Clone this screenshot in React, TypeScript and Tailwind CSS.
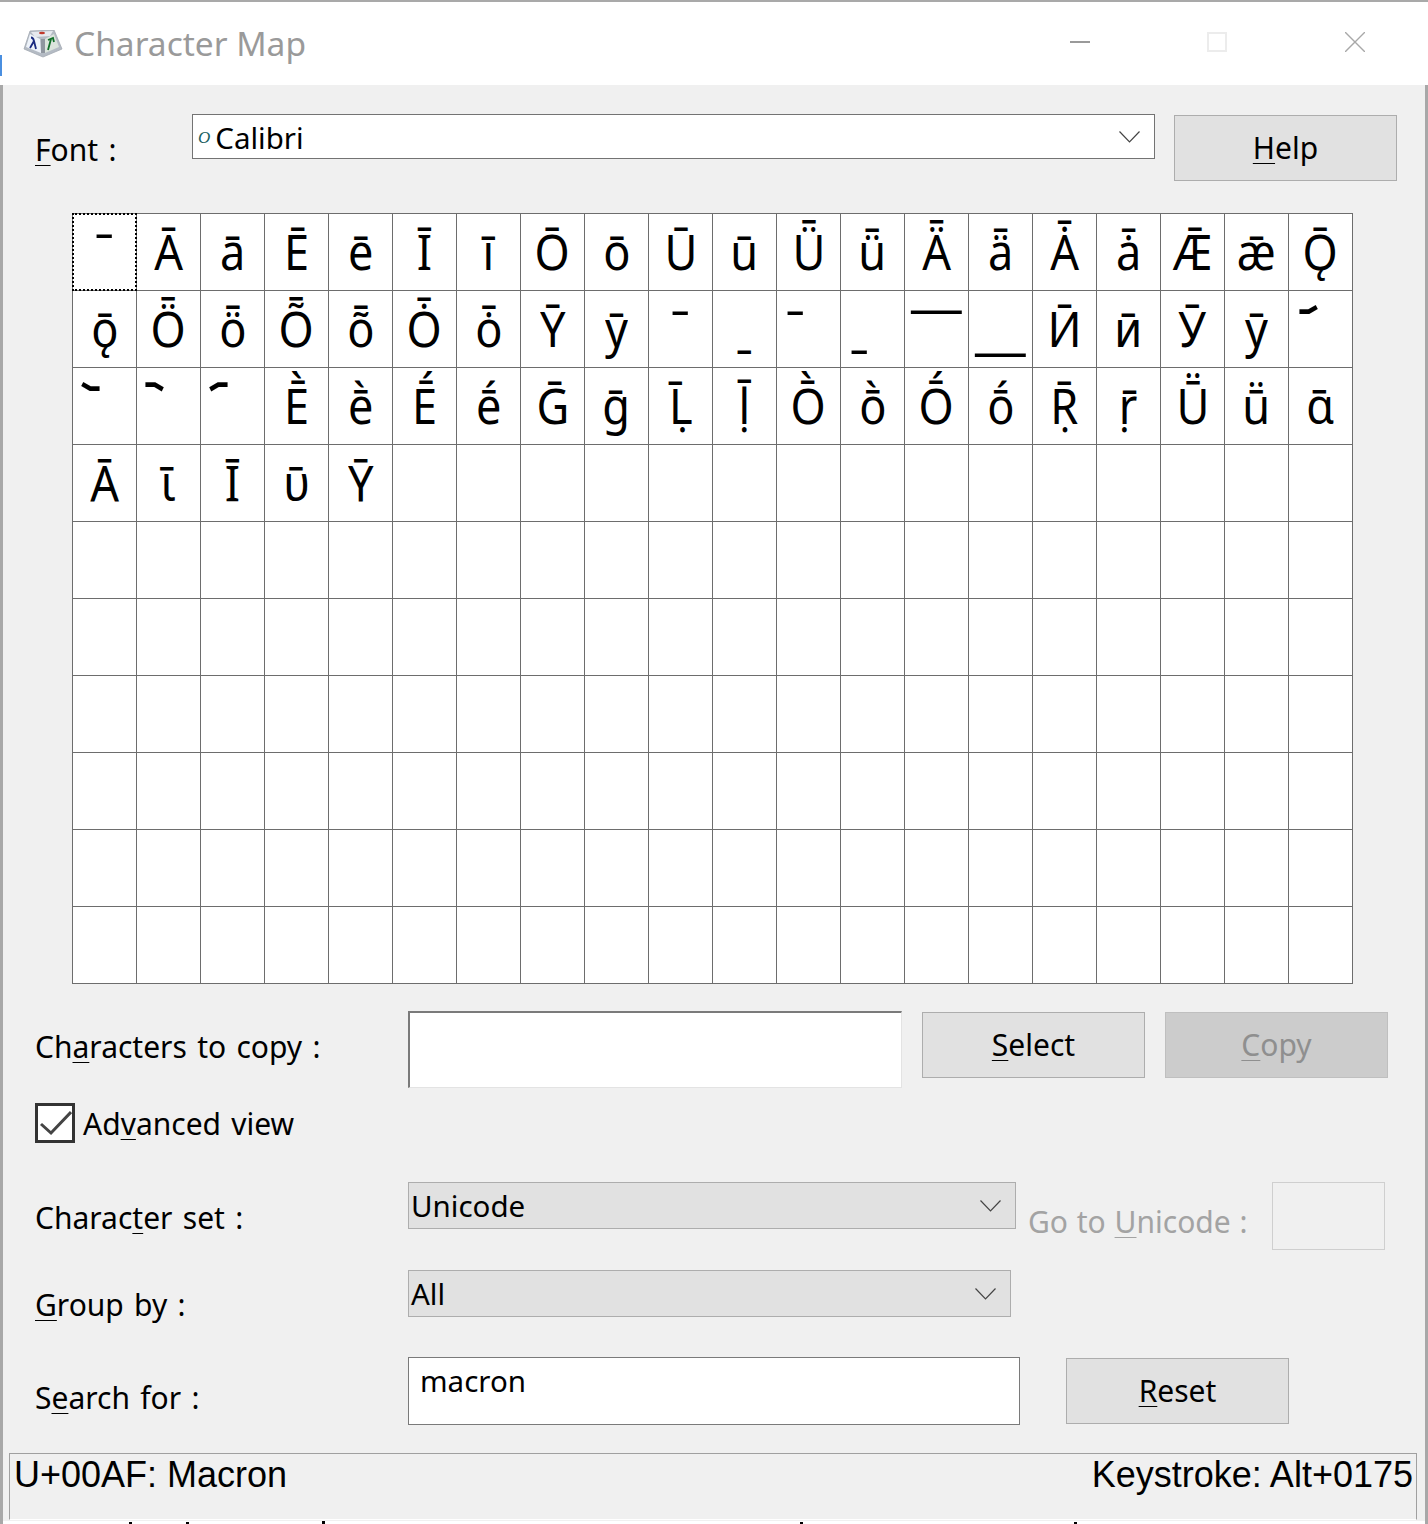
const GLYPHS = [
  'ˉ', 'Ā', 'ā', 'Ē', 'ē', 'Ī', 'ī', 'Ō', 'ō', 'Ū', 'ū', 'Ǖ', 'ǖ', 'Ǟ', 'ǟ', 'Ǡ', 'ǡ', 'Ǣ', 'ǣ', 'Ǭ',
  'ǭ', 'Ȫ', 'ȫ', 'Ȭ', 'ȭ', 'Ȱ', 'ȱ', 'Ȳ', 'ȳ', 'ˉ', 'ˍ', 'ˉ', 'ˍ', 'ˉ', 'ˍ', 'Ӣ', 'ӣ', 'Ӯ', 'ӯ', '\u00A0\u1DC4',
  '\u00A0\u1DC5', '\u00A0\u1DC6', '\u00A0\u1DC7', 'Ḕ', 'ḕ', 'Ḗ', 'ḗ', 'Ḡ', 'ḡ', 'Ḹ', 'ḹ', 'Ṑ', 'ṑ', 'Ṓ', 'ṓ', 'Ṝ', 'ṝ', 'Ṻ', 'ṻ', 'ᾱ',
  'Ᾱ', 'ῑ', 'Ῑ', 'ῡ', 'Ῡ',
]

// the few marks that sit off centre in the cell
const TWEAKS: Record<number, string> = {
  0: 'scale-x-[1.05] -translate-y-[2px]',
  29: 'scale-x-[1.05] -translate-y-[2px]',
  31: 'scale-x-[1.05] -translate-x-[13px] -translate-y-[2px]',
  32: 'scale-x-[1.05] -translate-x-[13px]',
  33: 'scale-x-[3.5] -translate-y-[3px]',
  34: 'scale-x-[3.5] translate-y-[3px]',
  39: 'scale-x-[0.93] -translate-x-[20px] text-[66px]',
  40: 'scale-x-[0.93] -translate-x-[22px] text-[66px]',
  41: 'scale-x-[0.93] -translate-x-[22px] text-[66px]',
  42: 'scale-x-[0.93] -translate-x-[22px] text-[66px]',
}

const cells = Array.from({ length: 200 }, (_, i) => GLYPHS[i] ?? '')

function Key({ children }: { children: string }) {
  return <span className="underline decoration-1 underline-offset-[4px] [text-decoration-skip-ink:none]">{children}</span>
}

function Btn({ children, disabled, className = '' }: { children: React.ReactNode; disabled?: boolean; className?: string }) {
  return (
    <button
      type="button"
      className={`flex h-[66px] w-[223px] items-center justify-center border ${disabled ? 'border-[#bfbfbf] bg-[#cccccc] text-[#8f8f8f]' : 'border-[#adadad] bg-[#e1e1e1] text-black'} ${className}`}
    >
      {children}
    </button>
  )
}

function Chevron() {
  return (
    <svg viewBox="0 0 21 12" className="h-[12px] w-[21px]" fill="none" stroke="#444" strokeWidth="1.2">
      <path d="M0.5 0.5 L10.5 11 L20.5 0.5" />
    </svg>
  )
}

function Combo({ value, className = '' }: { value: string; className?: string }) {
  return (
    <div className={`flex h-[47px] items-center justify-between border border-[#adadad] bg-[#e1e1e1] pl-[2px] pr-[14px] text-[29.5px] text-black ${className}`}>
      <span className="pt-[1px]">{value}</span>
      <Chevron />
    </div>
  )
}

function AppIcon() {
  return (
    <svg viewBox="0 0 40 28" className="h-[28px] w-[40px]">
      <path d="M7 1 L31 0 L39 19 L20 27 L1 19 Z" fill="#b4bbc4" stroke="#a3aab3" strokeWidth="0.8" />
      <path d="M8 2 L30 1 L27 6 L12 7 Z" fill="#e6e9ee" />
      <path d="M7 4 L17 9 L18 23 L3 17 Z" fill="#eef3fa" />
      <path d="M22 9 L31 4 L36 17 L22 23 Z" fill="#dbe4dc" />
      <path d="M18 9 L22 9 L22 23 L18 23 Z" fill="#8f969f" />
      <ellipse cx="19" cy="3" rx="3" ry="1.2" fill="#c0392b" />
      <path d="M7 18 L11 11 M8 7.5 C10 7.5 10.5 9 11 11 L13 19" stroke="#1a2a80" strokeWidth="1.8" fill="none" />
      <path d="M25 20 L28 9 M25 10 L30 8 L31 12" stroke="#12702a" strokeWidth="1.8" fill="none" />
    </svg>
  )
}

export default function App() {
  return (
    <div
      className="relative h-[1524px] w-[1428px] overflow-hidden bg-[#f0f0f0] text-[30px] leading-none text-black [word-spacing:2.5px]"
      style={{ fontFamily: '"Noto Sans", sans-serif' }}
    >
      <div className="flex h-[85px] items-center border-t-2 border-[#a9a9a9] bg-white pl-[23px]">
        <AppIcon />
        <span className="ml-[11px] text-[33.5px] [word-spacing:0] text-[#9a9a9a]">Character Map</span>
        <div className="ml-auto flex items-center pb-[3px]">
          <div className="mr-[117px] h-[2px] w-[20px] bg-[#9a9a9a]" />
          <div className="mr-[118px] h-[20px] w-[20px] border-2 border-[#ececec]" />
          <svg viewBox="0 0 20 20" className="mr-[63px] h-[20px] w-[20px]" stroke="#a8a8a8" strokeWidth="1.4">
            <path d="M0 0 L20 20 M20 0 L0 20" />
          </svg>
        </div>
      </div>

      <div className="flex h-[1439px] flex-col border-x-[3px] border-[#a8a8a8] pl-[32px]">
        <div className="mt-[29px] flex items-start">
          <div className="w-[157px] pt-[21px]"><Key>F</Key>ont :</div>
          <div className="flex h-[45px] w-[963px] items-center justify-between border border-[#737373] bg-white pl-[5px] pr-[14px] text-[29.5px]">
            <span className="flex items-center pt-[2px]">
              <span className="mr-[5px] text-[17px] italic text-[#1a5f5f]" style={{ fontFamily: '"Liberation Serif", serif' }}>O</span>
              Calibri
            </span>
            <Chevron />
          </div>
          <Btn className="ml-[19px] mt-px"><span><Key>H</Key>elp</span></Btn>
        </div>

        <div className="relative ml-[37px] mt-[32px] grid w-[1281px] grid-cols-[repeat(20,64px)] grid-rows-[repeat(10,77px)] border-l border-t border-[#6d6d6d] bg-white text-[49px] [word-spacing:0]">
          {cells.map((g, i) => (
            <div key={i} className="whitespace-pre border-b border-r border-[#6d6d6d] text-center leading-[75px]">
              <span className={`inline-block ${TWEAKS[i] ?? 'scale-x-[0.92]'}`}>{g}</span>
            </div>
          ))}
          <div className="absolute left-[-1px] top-[-1px] h-[78px] w-[65px] border-2 border-dotted border-black" />
        </div>

        <div className="mt-[27px] flex items-start">
          <div className="w-[373px] pt-[21px]">Ch<Key>a</Key>racters to copy :</div>
          <div className="h-[77px] w-[494px] border-2 border-b border-r border-[#7a7a7a] border-b-[#e3e3e3] border-r-[#e3e3e3] bg-white" />
          <Btn className="ml-[20px] mt-px"><span><Key>S</Key>elect</span></Btn>
          <Btn disabled className="ml-[20px] mt-px"><span><Key>C</Key>opy</span></Btn>
        </div>

        <div className="mt-[15px] flex h-[40px] items-center">
          <div className="flex h-[40px] w-[40px] items-center justify-center border-[3px] border-[#333] bg-white">
            <svg viewBox="0 0 34 34" className="h-[34px] w-[34px]" fill="none" stroke="#444" strokeWidth="3">
              <path d="M3 18 L13 27 L33 6" />
            </svg>
          </div>
          <span className="ml-[8px] pt-[2px]">Ad<Key>v</Key>anced view</span>
        </div>

        <div className="mt-[39px] flex items-start">
          <div className="w-[373px] pt-[21px]">Charac<Key>t</Key>er set :</div>
          <Combo value="Unicode" className="w-[608px]" />
          <div className="ml-[12px] w-[244px] whitespace-nowrap pt-[25px] text-[#a3a3a3] [word-spacing:1px]">Go to <Key>U</Key>nicode :</div>
          <div className="h-[68px] w-[113px] border border-[#cfcfcf]" />
        </div>

        <div className="mt-[20px] flex items-start">
          <div className="w-[373px] pt-[20px]"><Key>G</Key>roup by :</div>
          <Combo value="All" className="w-[603px]" />
        </div>

        <div className="mt-[37px] flex items-start">
          <div className="w-[373px] pt-[26px]">S<Key>e</Key>arch for :</div>
          <div className="h-[68px] w-[612px] border border-[#7a7a7a] bg-white pl-[11px] pt-[8px] text-[29.5px]">macron</div>
          <Btn className="ml-[46px] mt-px"><span><Key>R</Key>eset</span></Btn>
        </div>
      </div>

      <div
        className="absolute left-[9px] top-[1453px] flex h-[67px] w-[1408px] justify-between border border-[#a0a0a0] border-b-white pl-[4px] pr-[5px] pt-[1px] text-[36px] leading-[40px] [word-spacing:0]"
        style={{ fontFamily: '"Liberation Sans", sans-serif' }}
      >
        <span>U+00AF: Macron</span>
        <span className="mr-[-2px]">Keystroke: Alt+0175</span>
      </div>

      {/* cut-off edge of the capture */}
      <div className="absolute bottom-0 left-[3px] right-[3px] h-[3px] bg-white" />
      <div className="absolute bottom-0 left-[129px] h-[2px] w-[3px] bg-black" />
      <div className="absolute bottom-0 left-[186px] h-[2px] w-[3px] bg-black" />
      <div className="absolute bottom-0 left-[322px] h-[3px] w-[3px] bg-black" />
      <div className="absolute bottom-0 left-[800px] h-[2px] w-[3px] bg-black" />
      <div className="absolute bottom-0 left-[1074px] h-[2px] w-[3px] bg-black" />
      <div className="absolute left-0 top-[55px] h-[21px] w-[2px] bg-[#4a8fe0]" />
    </div>
  )
}
